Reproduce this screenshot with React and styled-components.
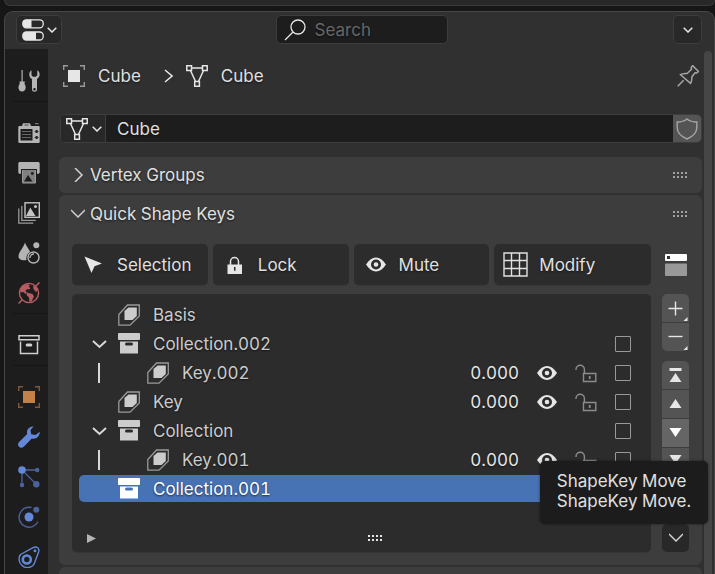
import { useState } from "react";
import styled, { createGlobalStyle } from "styled-components";

const tabGroups = [
  ["tool"],
  ["render", "output", "viewLayer", "scene", "world"],
  ["collection"],
  ["object", "modifiers", "particles", "physics", "constraints"],
];

const keys = [
  { name: "Basis", type: "key" },
  { name: "Collection.002", type: "folder", open: true },
  { name: "Key.002", type: "key", nested: true, value: "0.000" },
  { name: "Key", type: "key", value: "0.000" },
  { name: "Collection", type: "folder", open: true },
  { name: "Key.001", type: "key", nested: true, value: "0.000" },
  { name: "Collection.001", type: "folder" },
];

function App() {
  const [search, setSearch] = useState("");
  const [name, setName] = useState("Cube");
  const [active, setActive] = useState("Collection.001");

  return (
    <>
      <GlobalStyle />
      <Screen>
        <AreaAbove />
        <Editor>
          <Header>
            <EditorTypeBtn aria-label="Editor type">
              <Icon name="properties" />
              <Chevron />
            </EditorTypeBtn>
            <SearchBox>
              <Icon name="search" />
              <input
                aria-label="Search"
                placeholder="Search"
                value={search}
                onChange={(e) => setSearch(e.target.value)}
              />
            </SearchBox>
            <OptionsBtn aria-label="Options">
              <Chevron />
            </OptionsBtn>
          </Header>
          <Body>
            <Tabs>
              {tabGroups.map((group) => (
                <TabGroup key={group[0]}>
                  {group.map((tab) => (
                    <Tab key={tab} aria-label={tab}>
                      <Icon name={tab} />
                    </Tab>
                  ))}
                </TabGroup>
              ))}
            </Tabs>
            <Content>
              <Breadcrumb>
                <Icon name="objectWhite" />
                <span>Cube</span>
                <CrumbArrow viewBox="0 0 9 14">
                  <path d="M1 1l7 6-7 6" />
                </CrumbArrow>
                <Icon name="mesh" />
                <span>Cube</span>
                <PinBtn aria-label="Pin">
                  <Icon name="pin" />
                </PinBtn>
              </Breadcrumb>
              <DataBlock>
                <DataTypeBtn aria-label="Browse mesh data">
                  <Icon name="mesh" />
                  <Chevron />
                </DataTypeBtn>
                <input
                  aria-label="Name"
                  value={name}
                  onChange={(e) => setName(e.target.value)}
                />
                <ShieldBtn aria-label="Fake user">
                  <Icon name="shield" />
                </ShieldBtn>
              </DataBlock>

              <Panel>
                <PanelHeader>
                  <PanelArrow viewBox="0 0 14 14">
                    <path d="M4 0l7 7-7 7" />
                  </PanelArrow>
                  <span>Vertex Groups</span>
                  <Grip />
                </PanelHeader>
              </Panel>
              <Panel>
                <PanelHeader $open>
                  <PanelArrow viewBox="0 0 14 14">
                    <path d="M0 3l7 7 7-7" />
                  </PanelArrow>
                  <span>Quick Shape Keys</span>
                  <Grip />
                </PanelHeader>
                <PanelBody>
                  <Actions>
                    <ActionBtn>
                      <Icon name="cursor" size={25} />
                      Selection
                    </ActionBtn>
                    <ActionBtn>
                      <Icon name="lock" size={25} />
                      Lock
                    </ActionBtn>
                    <ActionBtn>
                      <Icon name="eyeLarge" size={25} />
                      Mute
                    </ActionBtn>
                    <ActionBtn $wide>
                      <Icon name="grid" size={25} />
                      Modify
                    </ActionBtn>
                  </Actions>
                  <LayoutBtn aria-label="Layout">
                    <Icon name="layout" />
                  </LayoutBtn>

                  <List>
                    {keys.map((item) => (
                      <KeyRow
                        key={item.name}
                        item={item}
                        active={active === item.name}
                        onSelect={() => setActive(item.name)}
                      />
                    ))}
                    <ListFooter>
                      <svg width="9" height="9" viewBox="0 0 9 9">
                        <path d="M0 0l9 4.500L0 9z" fill="#b4b4b4" />
                      </svg>
                      <Grip $bright />
                    </ListFooter>
                  </List>
                  <Tools>
                    <ToolGroup>
                      <ToolBtn aria-label="Add"><Icon name="plus" size={27} /></ToolBtn>
                      <ToolBtn aria-label="Remove"><Icon name="minus" size={27} /></ToolBtn>
                    </ToolGroup>
                    <ToolGroup>
                      <ToolBtn aria-label="Move to top"><Icon name="top" size={27} /></ToolBtn>
                      <ToolBtn aria-label="Move up"><Icon name="up" size={27} /></ToolBtn>
                      <ToolBtn aria-label="Move down" $hover><Icon name="down" size={27} /></ToolBtn>
                      <ToolBtn aria-label="Move to bottom"><Icon name="bottom" size={27} /></ToolBtn>
                      <Tooltip role="tooltip">
                        <p>ShapeKey Move</p>
                        <p>ShapeKey Move.</p>
                      </Tooltip>
                    </ToolGroup>
                    <MenuBtn aria-label="Shape key specials">
                      <PanelArrow viewBox="0 0 14 14">
                        <path d="M0 3l7 7 7-7" />
                      </PanelArrow>
                    </MenuBtn>
                  </Tools>
                </PanelBody>
              </Panel>
              <Panel>
                <PanelHeader aria-label="Next panel" />
              </Panel>
            </Content>
            <ScrollBar />
          </Body>
        </Editor>
      </Screen>
    </>
  );
}
export default App;

function KeyRow({ item, active, onSelect }) {
  const hasControls = item.value !== undefined;
  return (
    <Row $active={active} onClick={onSelect}>
      <Expander viewBox="0 0 23 22">
        {item.open && <path d="M5 8l6.500 6 6.500-6" />}
        {item.nested && <path d="M11 1v20" />}
      </Expander>
      <RowIcon $nested={item.nested}>
        <Icon name={item.type} />
      </RowIcon>
      <RowName>{item.name}</RowName>
      {hasControls && (
        <>
          <ValueInput aria-label={`${item.name} value`} defaultValue={item.value} />
          <RowBtn aria-label="Mute"><Icon name="eye" /></RowBtn>
          <RowBtn aria-label="Lock"><Icon name="unlock" /></RowBtn>
        </>
      )}
      {(hasControls || item.open) && (
        <Check type="checkbox" aria-label={`Select ${item.name}`} />
      )}
    </Row>
  );
}

function Chevron() {
  return (
    <svg width="10" height="6" viewBox="0 0 10 6" fill="none" stroke="#e6e6e6" strokeWidth="1.500">
      <path d="M.7.7L5 5 9.300.7" />
    </svg>
  );
}

function Icon({ name, size = 22 }) {
  return (
    <svg width={size} height={size} viewBox={`0 0 ${size} ${size}`} fill="none" aria-hidden="true">
      {icons[name]}
    </svg>
  );
}

const corners = "M.7 5V.7H5M17 .7h4.300V5M21.300 17v4.300H17M5 21.300H.7V17";
const eyePath =
  "M0 7C3 2.500 6.300 0 10 0s7 2.500 10 7c-3 4.500-6.300 7-10 7S3 11.500 0 7zM10 2a5 5 0 1 0 0 10 5 5 0 0 0 0-10z";
const wrench =
  "M15.500.5c-4.500 0-7.300 3.500-6.300 7.500L1.300 15.800c-1.700 1.700-1.500 3.800-.3 5 1.300 1.300 3.500 1.200 5-.4l7.800-7.900c4.200 1 8-2 8-6.800L17.500 9 13.200 8.300l-.7-4.300z";

const icons = {
  properties: (
    <>
      <rect x=".8" y=".8" width="20.400" height="8" rx="3.500" stroke="#e6e6e6" strokeWidth="1.300" />
      <path d="M4 .8h5.500v8H4a3 3 0 0 1-3-3v-2a3 3 0 0 1 3-3z" fill="#e6e6e6" />
      <rect x=".8" y="13" width="20.400" height="8" rx="3.500" stroke="#e6e6e6" strokeWidth="1.300" />
      <path d="M4 13h10v8H4a3 3 0 0 1-3-3v-2a3 3 0 0 1 3-3z" fill="#e6e6e6" />
    </>
  ),
  search: (
    <g stroke="#e6e6e6" strokeWidth="1.300">
      <circle cx="14" cy="8" r="7" />
      <path d="M9 13l-8 8" />
    </g>
  ),
  tool: (
    <g fill="#b4b4b4">
      <path d="M3.500 0h1.200v12H3.500z" />
      <path d="M1.500 11.500h5.300v1.800H6c2.500 2.200 2.400 8.200-2 8.200s-4.300-6-1.800-8.200h-.7z" />
      <path d="M13.500.2c-3 2-3.200 6.500.5 8.800v10.200a2.500 2.500 0 0 0 5 0V9c3.600-2.300 3.400-7 .3-8.800v5l-1.500 1.600H15l-1.500-1.600zM16.500 18a1.300 1.300 0 1 1 0 2.600 1.300 1.300 0 0 1 0-2.600z" fillRule="evenodd" />
    </g>
  ),
  render: (
    <>
      <path d="M1.500 4H4l1-2.800h7L13 4h7.500c.8 0 1.200.5 1.200 1.200v14.600c0 .8-.5 1.200-1.200 1.200h-19c-.8 0-1.200-.5-1.200-1.200V5.200C.3 4.500.8 4 1.500 4z" fill="#b4b4b4" />
      <path d="M17 1h3.500v1.200H17zM6.500 2.300h4V4h-4z" fill="#777" />
      <path d="M2.500 7h12v11.500h-12z" fill="#1d1d1d" />
      <path d="M4 9.500h9M4 12.500h9M4 15.500h9" stroke="#666" />
      <path d="M17.200 9.500L18.600 8l1.400 1.500L18.600 11zM17.200 15.500l1.400-1.500 1.400 1.500-1.400 1.500z" fill="#1d1d1d" stroke="#1d1d1d" />
    </>
  ),
  output: (
    <>
      <path d="M2 0h18c1 0 1.700.7 1.700 1.700V10c0 1-.5 1.800-1.700 1.800h-1V7H3v4.800H2C.8 11.800.3 11 .3 10V1.700C.3.700 1 0 2 0z" fill="#b4b4b4" />
      <path d="M4.500 8v13h13V8" fill="#808080" stroke="#999" strokeWidth="1" />
      <path d="M6 19.500l4-6.500 4.500 6.500z" fill="#1d1d1d" />
      <circle cx="14.300" cy="11.500" r="1.400" fill="#1d1d1d" />
    </>
  ),
  viewLayer: (
    <>
      <path d="M.8 6.500v14.700h14.500M3.800 4v14.300h14" stroke="#999" strokeWidth="1.300" />
      <rect x="7" y=".8" width="14.300" height="14.500" stroke="#c4c4c4" strokeWidth="1.400" />
      <path d="M8 14l4.300-8.500L17.500 14z" fill="#c4c4c4" />
      <circle cx="17.500" cy="4.500" r="1.500" fill="#c4c4c4" />
    </>
  ),
  scene: (
    <>
      <path d="M7 .3C7.800 4 11.500 7.500 12 10c-2.800 1.500-4 4.500-3.500 8-4 1-8-.5-8-3.500C.5 10 6 5 7 .3z" fill="#b4b4b4" />
      <circle cx="18.300" cy="3.200" r="3" fill="#b4b4b4" />
      <circle cx="15.500" cy="15.500" r="5.500" stroke="#b4b4b4" strokeWidth="1.400" />
      <path d="M12 16a3.800 3.800 0 0 1 4-4" stroke="#b4b4b4" strokeWidth="1.300" />
    </>
  ),
  world: (
    <>
      <circle cx="11" cy="11" r="9.600" stroke="#b85b62" strokeWidth="1.400" />
      <path d="M18 4l3.500-3.500M4 18L.5 21.500" stroke="#b85b62" strokeWidth="1.500" />
      <path d="M2 8c1-3 4-5.500 8-6l2 1.500-1.500 1 2 1.500L11 7.500 9 7l-1.500 2L9 10.500 7.500 12l-2-2-3 .5zM9 10.500l5.500 1.500 1.500 2.500-2.500 5-2 .5-.5-4.500L8.500 13zM15 4l3 .5 2 3.500-2 2-2.500-3z" fill="#b85b62" />
    </>
  ),
  collection: (
    <>
      <path d="M1 1.700h20v4H1zM2.500 7.500v12h17v-12" stroke="#d0d0d0" strokeWidth="1.500" />
      <rect x="7.700" y="9.500" width="6.600" height="3" rx="1.500" fill="#d0d0d0" />
    </>
  ),
  object: (
    <>
      <path d={corners} stroke="#7f5739" strokeWidth="1.400" />
      <path d="M5 5h12v12H5z" fill="#c38149" />
    </>
  ),
  objectWhite: (
    <>
      <path d={corners} stroke="#999" strokeWidth="1.400" />
      <path d="M5 5h12v12H5z" fill="#e6e6e6" />
    </>
  ),
  modifiers: <path d={wrench} fill="#6488d8" />,
  particles: (
    <>
      <path d="M4 4h15M4 4v15M7 7l11 11" stroke="#4b639c" strokeWidth="1.300" />
      <circle cx="4" cy="4" r="3.800" fill="#6488d8" />
      <g fill="#4b639c">
        <circle cx="19.200" cy="4" r="2.200" />
        <circle cx="4" cy="19" r="2.200" />
        <circle cx="18.300" cy="18.300" r="3.200" />
      </g>
    </>
  ),
  physics: (
    <>
      <path d="M13.500 1.500A10 10 0 1 0 20 15.800" stroke="#4b639c" strokeWidth="1.400" />
      <circle cx="18.300" cy="3.700" r="3" fill="#4b639c" />
      <circle cx="11" cy="11" r="4.500" fill="#6488d8" />
    </>
  ),
  constraints: (
    <>
      <path d="M2.500 8.500L15.500 1.500c3.500-1.500 6 1 5.300 4l-4.300 11.500C14.500 22 8 23 4 19.500.5 16.500.2 11.500 2.500 8.500z" stroke="#6488d8" strokeWidth="1.400" />
      <circle cx="8.800" cy="13.500" r="4" stroke="#6488d8" strokeWidth="2.600" />
      <circle cx="17" cy="4.800" r="1.500" fill="#6488d8" />
    </>
  ),
  mesh: (
    <g stroke="#e6e6e6" strokeWidth="1.500">
      <path d="M5.500 3h11M4.500 5.500l5 11M17.500 5.500l-5 11" />
      <path d="M.8.8h4.700v4.700H.8zM16.500.8h4.700v4.700h-4.700zM8.700 16.500h4.700v4.700H8.700z" />
    </g>
  ),
  pin: (
    <path
      d="M.7 21.300l6-6M3.500 9.700c3-1.700 5.200-1 7-1.500l4-4-.3-1.700 1.500-1.800 5.800 5.800-1.800 1.500-1.700-.3-3 4c-.5 1.800.3 4.300-1.500 6.700z"
      stroke="#a6a6a6"
      strokeWidth="1.500"
    />
  ),
  shield: (
    <path
      d="M11 1c2.500 2 6 3 9.800 3v5.500c0 5-4 9-9.800 11.500C5.200 18.500 1.200 14.500 1.200 9.500V4C5 4 8.500 3 11 1z"
      stroke="#a6a6a6"
      strokeWidth="1.400"
    />
  ),
  cursor: <path d="M3.500 4.500l17.500 7-7.500 2.800L10.500 21z" fill="#e6e6e6" />,
  lock: (
    <>
      <path d="M8.500 13V9.500a4 4 0 0 1 8 0V13" stroke="#e6e6e6" strokeWidth="1.500" />
      <path d="M5.500 12.500h14.500V22h-14.500zM12 15v3.800h1.500V15z" fill="#e6e6e6" fillRule="evenodd" />
    </>
  ),
  eyeLarge: (
    <g transform="translate(3 5.500)">
      <path d={eyePath} fill="#e6e6e6" fillRule="evenodd" />
      <circle cx="10" cy="7" r="2.300" fill="#e6e6e6" />
    </g>
  ),
  eye: (
    <g transform="translate(1 4)">
      <path d={eyePath} fill="#e6e6e6" fillRule="evenodd" />
      <circle cx="10" cy="7" r="2.300" fill="#e6e6e6" />
    </g>
  ),
  grid: (
    <path d="M1 1h23v23H1zM1 8.500h23M1 16.500h23M8.500 1v23M16.500 1v23" stroke="#e0e0e0" strokeWidth="1.400" />
  ),
  layout: (
    <>
      <rect y="0" width="22" height="7" rx="1" fill="#fff" />
      <path d="M2 2h3v3H2z" fill="#333" />
      <rect y="9.500" width="22" height="12.500" rx="1" fill="#999" />
    </>
  ),
  unlock: (
    <g stroke="#8c8c8c" strokeWidth="1.400">
      <path d="M1 8V7.500a4.200 4.200 0 0 1 8.400 0v3.500M8.500 11.500h12.300v8H8.500z" />
      <path d="M14.700 14v3" strokeWidth="1.800" />
    </g>
  ),
  key: (
    <>
      <path d="M.8 10.500L9.500 1h11.800v11L12 21.200H.8z" stroke="#999" strokeWidth="1.300" />
      <path d="M6.500 7L10.500 3.500h8.300V12l-4.300 4h-8z" fill="#ccc" />
    </>
  ),
  folder: (
    <>
      <rect y="0" width="22" height="7" rx="1" fill="currentColor" />
      <path
        d="M2 8.500h18v12H2zM8.500 9.500a1.500 1.500 0 0 0 0 3h5a1.500 1.500 0 0 0 0-3z"
        fill="currentColor"
        fillRule="evenodd"
      />
    </>
  ),
  plus: (
    <>
      <path d="M13.500 6.500v14M6.500 13.500h14" stroke="#e6e6e6" strokeWidth="1.400" />
      <path d="M25.500 22v4h-4z" fill="#e6e6e6" />
    </>
  ),
  minus: (
    <>
      <path d="M6.500 12.500h14" stroke="#e6e6e6" strokeWidth="1.400" />
      <path d="M25.500 22v4h-4z" fill="#e6e6e6" />
    </>
  ),
  top: <path d="M7.500 6h12v3h-12zM13.500 11l6 9h-12z" fill="#e6e6e6" />,
  up: <path d="M13.500 8l6 9h-12z" fill="#e6e6e6" />,
  down: <path d="M7.500 8h12l-6 9z" fill="#fff" />,
  bottom: <path d="M7.500 6h12l-6 9zM7.500 17h12v3h-12z" fill="#e6e6e6" />,
};

const GlobalStyle = createGlobalStyle`
  * {
    box-sizing: border-box;
  }
  body {
    margin: 0;
    background: #161616;
    color: #e0e0e0;
    font-family: Inter, "Liberation Sans", sans-serif;
    font-size: 17px;
    line-height: 20px;
    font-variant-numeric: tabular-nums;
    text-shadow: 0 1px 2px rgba(0, 0, 0, 0.6);
  }
  button, input {
    font: inherit;
    color: inherit;
    text-shadow: inherit;
    border: none;
    background: none;
    padding: 0;
    margin: 0;
    min-width: 0;
    outline: none;
  }
  svg {
    display: block;
    flex: none;
  }
  p {
    margin: 0;
  }
`;

const Screen = styled.div`
  display: flex;
  flex-direction: column;
  gap: 5px;
  height: 100vh;
  padding-left: 4px;
  overflow: hidden;
`;
const AreaAbove = styled.div`
  flex: none;
  height: 6px;
  background: #282828;
  border: 1px solid #3a3a3a;
  border-top: none;
  border-radius: 0 0 8px 8px;
`;
const Editor = styled.div`
  flex: 1;
  min-height: 0;
  display: flex;
  flex-direction: column;
  background: #303030;
  border: 1px solid #474747;
  border-bottom: none;
  border-radius: 9px 9px 0 0;
  overflow: hidden;
`;
const Header = styled.div`
  flex: none;
  display: grid;
  grid-template-columns: 51fr 172px 50fr;
  height: 37px;
  padding: 3px 12px 0 11px;
`;
const HeaderBtn = styled.button`
  display: flex;
  align-items: center;
  justify-content: center;
  height: 29px;
  background: #282828;
  border: 1px solid #3d3d3d;
  border-radius: 5px;
`;
const EditorTypeBtn = styled(HeaderBtn)`
  width: 46px;
  gap: 3px;
`;
const OptionsBtn = styled(HeaderBtn)`
  width: 29px;
  justify-self: end;
`;
const SearchBox = styled.label`
  display: flex;
  align-items: center;
  gap: 9px;
  height: 29px;
  padding: 0 7px;
  background: #1d1d1d;
  border: 1px solid #3d3d3d;
  border-radius: 5px;
  & > input {
    flex: 1;
  }
  & > input::placeholder {
    color: #686868;
    opacity: 1;
  }
`;
const Body = styled.div`
  flex: 1;
  min-height: 0;
  display: flex;
`;
const Tabs = styled.nav`
  flex: none;
  width: 43px;
  padding-top: 12px;
  background: #1d1d1d;
`;
const TabGroup = styled.div`
  margin-left: 8px;
  & + & {
    border-top: 1px solid #161616;
    padding-top: 11px;
  }
`;
const Tab = styled.button`
  display: flex;
  align-items: center;
  width: 100%;
  height: 40px;
  padding-left: 5px;
`;
const Content = styled.main`
  flex: 1;
  min-width: 0;
  padding-left: 11px;
`;
const ScrollBar = styled.div`
  flex: none;
  width: 8px;
  margin: 2px 2px 0;
  background: #464646;
  border-radius: 4px 4px 0 0;
`;
const Breadcrumb = styled.div`
  display: flex;
  align-items: center;
  gap: 13px;
  height: 53px;
  padding: 0 3px 0 4px;
`;
const CrumbArrow = styled.svg`
  width: 9px;
  height: 14px;
  margin-left: 10px;
  fill: none;
  stroke: #e6e6e6;
  stroke-width: 1.5;
`;
const PinBtn = styled.button`
  margin-left: auto;
`;
const DataBlock = styled.div`
  display: flex;
  height: 29px;
  margin: 12px 0 14px 1px;
  background: #1d1d1d;
  border: 1px solid #3d3d3d;
  border-radius: 5px;
  overflow: hidden;
  & > input {
    flex: 1;
    padding-left: 11px;
  }
`;
const DataTypeBtn = styled.button`
  display: flex;
  align-items: center;
  justify-content: flex-end;
  gap: 4px;
  width: 45px;
  padding-right: 3px;
  background: #282828;
  border-right: 1px solid #3d3d3d;
`;
const ShieldBtn = styled.button`
  display: flex;
  align-items: center;
  justify-content: center;
  width: 28px;
  background: #545454;
`;
const Panel = styled.section`
  margin-bottom: 2px;
  background: #3d3d3d;
  border-radius: 6px;
`;
const PanelHeader = styled.button`
  display: flex;
  align-items: center;
  gap: 5px;
  width: 100%;
  height: ${(props) => (props.$open ? "38px" : "36px")};
  padding: 0 14px 0 12px;
`;
const PanelArrow = styled.svg`
  width: 14px;
  height: 14px;
  fill: none;
  stroke: #d0d0d0;
  stroke-width: 1.5;
`;
const Grip = styled.i`
  width: 16px;
  height: 8px;
  margin-left: auto;
  background-image: radial-gradient(
    circle,
    ${(props) => (props.$bright ? "#e6e6e6" : "#a0a0a0")} 1px,
    transparent 1px
  );
  background-size: 4px 4px;
`;
const PanelBody = styled.div`
  display: grid;
  grid-template-columns: minmax(0, 1fr) 27px;
  gap: 9px 11px;
  padding: 11px 13px 13px;
`;
const Actions = styled.div`
  display: flex;
  gap: 5px;
`;
const ActionBtn = styled.button`
  flex: ${(props) => (props.$wide ? 157 : 136)} 1 0;
  display: flex;
  align-items: center;
  gap: 11px;
  height: 41px;
  background: #2c2c2c;
  border-radius: 5px;
  box-shadow: 0 1px 0 #363636;
  & > svg {
    margin-left: 9px;
  }
`;
const LayoutBtn = styled.button`
  display: flex;
  align-items: center;
  justify-content: center;
`;
const List = styled.div`
  display: flex;
  flex-direction: column;
  gap: 2px;
  padding: 7px 7px 0;
  background: #2c2c2c;
  border-radius: 5px;
  box-shadow: 0 1px 0 #363636;
`;
const Row = styled.div`
  display: flex;
  align-items: center;
  height: 27px;
  padding: 0 13px 0 9px;
  border-radius: 5px;
  color: ${(props) => (props.$active ? "#fff" : "#ccc")};
  background: ${(props) => (props.$active ? "#4772b3" : "none")};
`;
const Expander = styled.svg`
  width: 23px;
  height: 22px;
  fill: none;
  stroke: #d8d8d8;
  stroke-width: 2;
`;
const RowIcon = styled.span`
  margin-left: ${(props) => (props.$nested ? "36px" : "7px")};
`;
const RowName = styled.span`
  flex: 1;
  margin-left: 13px;
`;
const ValueInput = styled.input`
  width: 64px;
  color: #e6e6e6;
  text-align: right;
`;
const RowBtn = styled.button`
  flex: none;
  margin-left: 17px;
`;
const Check = styled.input`
  appearance: none;
  flex: none;
  width: 16px;
  height: 16px;
  margin-left: 18px;
  border: 1px solid #999;
  border-radius: 1px;
  &:checked {
    background: #4772b3;
  }
`;
const ListFooter = styled.div`
  display: flex;
  align-items: center;
  gap: 9px;
  height: 28px;
  margin-top: 20px;
  padding-left: 8px;
  & > i {
    margin-right: auto;
  }
`;
const Tools = styled.div`
  display: flex;
  flex-direction: column;
  gap: 10px;
`;
const ToolGroup = styled.div`
  position: relative;
  display: flex;
  flex-direction: column;
  gap: 1px;
  & > button:first-of-type {
    border-radius: 5px 5px 0 0;
  }
  & > button:last-of-type {
    border-radius: 0 0 5px 5px;
  }
`;
const ToolBtn = styled.button`
  height: 28px;
  background: ${(props) => (props.$hover ? "#656565" : "#545454")};
`;
const MenuBtn = styled.button`
  display: flex;
  align-items: center;
  justify-content: center;
  height: 28px;
  margin-top: auto;
  background: #282828;
  border-radius: 5px;
`;
const Tooltip = styled.div`
  position: absolute;
  top: 100px;
  right: -19px;
  padding: 10px 17px 13px;
  background: #1c1c1c;
  border-radius: 5px;
  box-shadow: 0 0 3px rgba(0, 0, 0, 0.5);
  text-shadow: none;
  white-space: nowrap;
`;
